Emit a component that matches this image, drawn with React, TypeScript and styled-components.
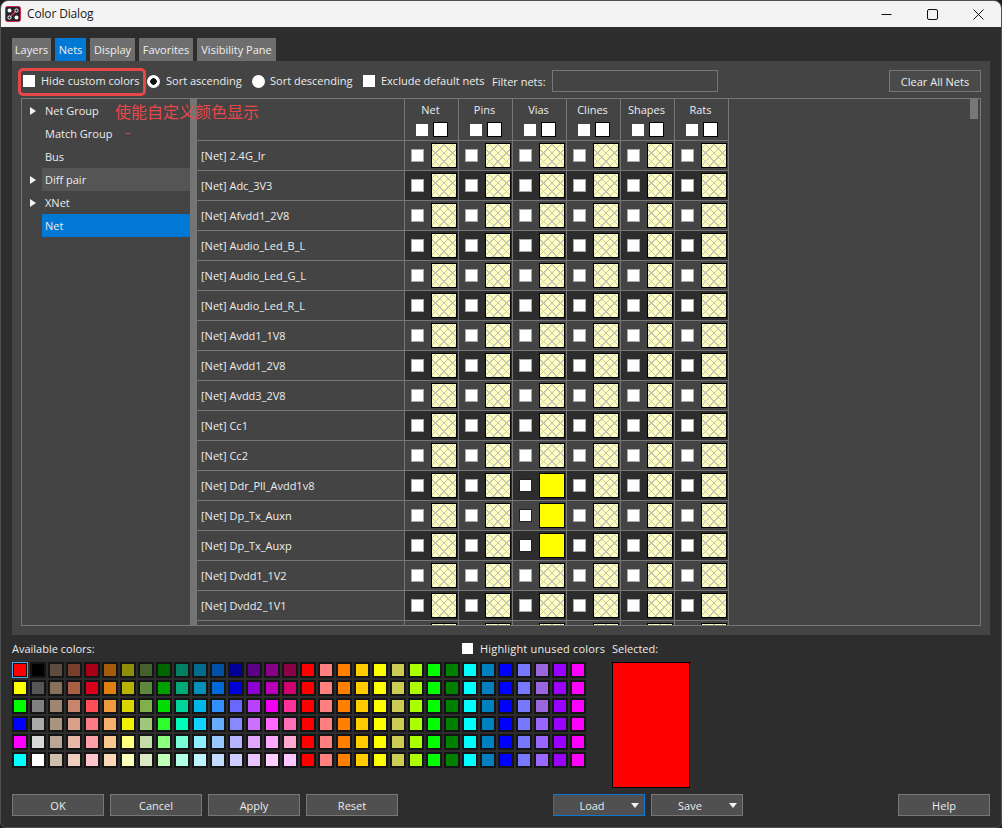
import React from 'react';
import styled, { createGlobalStyle } from 'styled-components';

const GlobalStyle = createGlobalStyle`
  html, body { margin: 0; padding: 0; background: #1e1e1e; }
  * { box-sizing: border-box; }
`;

const Window = styled.div`
  width: 1002px;
  height: 828px;
  overflow: hidden;
  display: flex;
  flex-direction: column;
  background: #2d2d2d;
  border: 1px solid #505050;
  border-radius: 8px 8px 6px 6px;
  font-family: "Open Sans", "Noto Sans CJK SC", sans-serif;
  font-size: 11px;
  color: #ececec;
  position: relative;
`;

const TitleBar = styled.div`
  height: 26px;
  flex: none;
  display: flex;
  align-items: center;
  padding-left: 4px;
  background: #f3f3f3;
  color: #1a1a1a;
  font-size: 12px;
`;

const TitleText = styled.span`
  margin-left: 6px;
  padding-bottom: 2px;
  letter-spacing: -0.15px;
`;

const WinControls = styled.div`
  margin-left: auto;
  display: flex;
`;

const WinButton = styled.div`
  width: 46px;
  height: 26px;
  display: flex;
  align-items: center;
  justify-content: center;
`;

const Content = styled.div`
  flex: 1;
  display: flex;
  flex-direction: column;
  padding: 11px 11px 0;
`;

const TabBar = styled.div`
  height: 23px;
  display: flex;
  gap: 4px;
`;

const Tab = styled.div<{ $active?: boolean; $w: number }>`
  width: ${p => p.$w}px;
  display: flex;
  align-items: center;
  justify-content: center;
  background: ${p => (p.$active ? '#0078d4' : '#6e6e6e')};
  color: #f0f0f0;
`;

const Panel = styled.div`
  height: 574px;
  padding: 9px;
  background: #444444;
  display: flex;
  flex-direction: column;
  gap: 6px;
`;

const Toolbar = styled.div`
  height: 22px;
  flex: none;
  display: flex;
  align-items: center;
  padding-left: 2px;
`;

const BoxCheck = styled.span`
  width: 12px;
  height: 12px;
  flex: none;
  background: #fff;
`;

const Radio = styled.span<{ $on?: boolean }>`
  width: 13px;
  height: 13px;
  flex: none;
  border-radius: 50%;
  background: ${p => (p.$on ? 'radial-gradient(circle, #111 0 3px, #fff 3.5px)' : '#fff')};
`;

const OptionLabel = styled.span<{ $w: number; $ml?: number; $low?: boolean }>`
  width: ${p => p.$w}px;
  flex: none;
  margin-left: ${p => p.$ml ?? 6}px;
  padding-bottom: ${p => (p.$low ? 0 : 2)}px;
  white-space: nowrap;
`;

const FilterInput = styled.div`
  width: 166px;
  height: 22px;
  margin-left: 6px;
  border: 1px solid #777;
  background: #444;
`;

const ClearButton = styled.div`
  width: 92px;
  height: 22px;
  margin-left: auto;
  display: flex;
  align-items: center;
  justify-content: center;
  border: 1px solid #777;
  background: #4a4a4a;
`;

const Frame = styled.div`
  height: 528px;
  flex: none;
  display: flex;
  border: 1px solid #777;
  overflow: hidden;
`;

const Tree = styled.div`
  width: 168px;
  flex: none;
`;

const TreeItem = styled.div`
  height: 23px;
  display: flex;
  align-items: center;
`;

const ArrowSlot = styled.span`
  width: 20px;
  flex: none;
  padding-left: 8px;
`;

const Arrow = styled.span`
  display: block;
  width: 0;
  height: 0;
  border-left: 6px solid #f2f2f2;
  border-top: 4.5px solid transparent;
  border-bottom: 4.5px solid transparent;
`;

const TreeLabel = styled.span<{ $tone?: 'hover' | 'selected' }>`
  flex: 1;
  height: 23px;
  line-height: 23px;
  padding-left: 3px;
  background: ${p => (p.$tone === 'selected' ? '#0078d4' : p.$tone === 'hover' ? '#555555' : 'transparent')};
`;

const Splitter = styled.div`
  width: 7px;
  flex: none;
  background: #747474;
`;

const TableArea = styled.div`
  flex: 1;
  position: relative;
  overflow: hidden;
`;

const ScrollThumb = styled.div`
  position: absolute;
  top: 0;
  right: 2px;
  width: 8px;
  height: 20px;
  background: #777;
`;

const GridRow = styled.div<{ $header?: boolean }>`
  width: 532px;
  height: ${p => (p.$header ? 42 : 30)}px;
  display: grid;
  grid-template-columns: 208px repeat(6, 54px);
  border-bottom: 1px solid #777;
`;

const NameCell = styled.div`
  display: flex;
  align-items: center;
  padding-left: 4px;
  border-right: 1px solid #777;
  white-space: nowrap;
`;

const HeadCell = styled.div`
  display: flex;
  flex-direction: column;
  align-items: center;
  padding: 3px 2px 0 0;
  border-right: 1px solid #777;
`;

const HeadChecks = styled.div`
  margin: 5px 0 0 11px;
  align-self: flex-start;
  display: flex;
  align-items: center;
  gap: 5px;
`;

const HeadSmall = styled.span`
  width: 12px;
  height: 12px;
  background: #fff;
`;

const HeadBig = styled.span`
  width: 15px;
  height: 15px;
  background: #fff;
  border: 1px solid #000;
`;

const ColorCell = styled.div<{ $dark: boolean }>`
  display: flex;
  align-items: center;
  padding-left: 6px;
  background: ${p => (p.$dark ? '#2d2d2d' : '#444444')};
  border-right: 1px solid #777;
`;

const CellCheck = styled.span<{ $plain?: boolean }>`
  width: 13px;
  height: 13px;
  flex: none;
  background: #fff;
  border: ${p => (p.$plain ? '1px solid #222' : '1px solid #a8a8a8')};
`;

const Swatch = styled.span<{ $fill?: string }>`
  width: 26px;
  height: 25px;
  flex: none;
  margin-left: 7px;
  border: 1px solid #000;
  background-color: ${p => p.$fill || '#ffffc0'};
  background-image: ${p =>
    p.$fill
      ? 'none'
      : `repeating-linear-gradient(45deg, #c6c6b6 0 1px, transparent 1px 6px),
         repeating-linear-gradient(-45deg, #c6c6b6 0 1px, transparent 1px 6px)`};
`;

const Lower = styled.div`
  margin-top: 7px;
  display: grid;
  grid-template-columns: 600px 1fr;
`;

const LowerHead = styled.div`
  height: 13px;
  display: flex;
  align-items: center;
`;

const HighlightCheck = styled.span`
  width: 11px;
  height: 11px;
  margin-left: auto;
  background: #fff;
`;

const HighlightLabel = styled.span`
  width: 125px;
  margin: 0 7px 0 7px;
  letter-spacing: 0.18px;
  white-space: nowrap;
`;

const PaletteGrid = styled.div`
  margin-top: 7px;
  display: grid;
  grid-template-rows: repeat(6, 16px);
  grid-auto-flow: column;
  grid-auto-columns: 16px;
  gap: 2px;
`;

const PaletteCell = styled.span<{ $c: string; $current?: boolean }>`
  background: ${p => p.$c};
  border: 2px solid #141414;
  ${p => p.$current && 'outline: 1px solid #4aa8e8; outline-offset: -1px;'}
`;

const SelectedBox = styled.div`
  margin-top: 7px;
  width: 78px;
  height: 126px;
  background: #ff0000;
  border: 1px solid #000;
`;

const ButtonRow = styled.div`
  margin-top: 6px;
  display: flex;
  gap: 6px;
`;

const Button = styled.div<{ $ml?: string; $menu?: boolean; $focus?: boolean }>`
  position: relative;
  width: 92px;
  height: 22px;
  display: flex;
  align-items: center;
  justify-content: center;
  padding-right: ${p => (p.$menu ? 14 : 0)}px;
  margin-left: ${p => p.$ml || 0};
  background: #505050;
  border: 1px solid ${p => (p.$focus ? '#0a78d0' : '#777')};
`;

const MenuArrow = styled.span`
  position: absolute;
  right: 5px;
  top: 8px;
  width: 0;
  height: 0;
  border-top: 5px solid #f2f2f2;
  border-left: 4.5px solid transparent;
  border-right: 4.5px solid transparent;
`;

const NoteBox = styled.div`
  position: absolute;
  left: 17px;
  top: 67px;
  width: 128px;
  height: 28px;
  border: 3px solid #e8474a;
  border-radius: 5px;
`;

const NoteText = styled.div`
  position: absolute;
  left: 114px;
  top: 101px;
  font-size: 16px;
  line-height: 20px;
  color: #e8474a;
  white-space: nowrap;
`;

const NoteDash = styled.div`
  position: absolute;
  left: 125px;
  top: 132px;
  width: 4px;
  height: 1px;
  background: #e8474a;
`;

const tabs = [
  { label: 'Layers', w: 39 },
  { label: 'Nets', w: 31, active: true },
  { label: 'Display', w: 45 },
  { label: 'Favorites', w: 54 },
  { label: 'Visibility Pane', w: 79 },
];

const treeItems: { label: string; arrow?: boolean; tone?: 'hover' | 'selected' }[] = [
  { label: 'Net Group', arrow: true },
  { label: 'Match Group' },
  { label: 'Bus' },
  { label: 'Diff pair', arrow: true, tone: 'hover' },
  { label: 'XNet', arrow: true },
  { label: 'Net', tone: 'selected' },
];

const columns = ['Net', 'Pins', 'Vias', 'Clines', 'Shapes', 'Rats'];

const nets = [
  '2.4G_Ir', 'Adc_3V3', 'Afvdd1_2V8', 'Audio_Led_B_L', 'Audio_Led_G_L', 'Audio_Led_R_L',
  'Avdd1_1V8', 'Avdd1_2V8', 'Avdd3_2V8', 'Cc1', 'Cc2', 'Ddr_Pll_Avdd1v8',
  'Dp_Tx_Auxn', 'Dp_Tx_Auxp', 'Dvdd1_1V2', 'Dvdd2_1V1', '',
];

// palette is listed column by column, 6 shades each
const R6 = (c: string) => [c, c, c, c, c, c];
const palette: string[][] = [
  ['#ff0000', '#ffff00', '#00ff00', '#0000ff', '#ff00ff', '#00ffff'],
  ['#000000', '#555555', '#808080', '#aaaaaa', '#d8d8d8', '#ffffff'],
  ['#5e4c3e', '#87705c', '#9e8672', '#a8947f', '#baa697', '#cdbfab'],
  ['#78402c', '#aa5f44', '#c9856c', '#d9a08c', '#e8b8a8', '#efccc0'],
  ['#a80014', '#d9001a', '#ff4d5a', '#ff7b85', '#ff9fa8', '#ffc4cc'],
  ['#a45c0c', '#e07f10', '#f09a40', '#f4b06c', '#f8c890', '#fcd8b4'],
  ['#8e8e0a', '#b4b400', '#d8d800', '#f0f000', '#ffff80', '#ffffbc'],
  ['#44602c', '#60883c', '#80b04c', '#a0c878', '#c4dca8', '#dce8c4'],
  ['#006400', '#00a000', '#00dc00', '#2cff2c', '#8cff80', '#c0ffb8'],
  ['#008060', '#00a878', '#00d498', '#00fcb8', '#78ffd8', '#b4ffe8'],
  ['#006c8c', '#0090b8', '#00b8e8', '#10d4ff', '#90ecff', '#c0f4ff'],
  ['#0050a8', '#0068d8', '#3090ff', '#68acff', '#98c8ff', '#c0dcff'],
  ['#000098', '#0000d8', '#6868ff', '#8888ff', '#b4b4ff', '#ccccff'],
  ['#5c0088', '#8c00d0', '#b840ff', '#cc70ff', '#e0a8ff', '#e8c4ff'],
  ['#880088', '#b800b8', '#f000f0', '#ff68ff', '#ffa8ff', '#ffd0ff'],
  ['#8c0048', '#d00070', '#ff3098', '#ff70b8', '#ffa8d0', '#ffc8ff'],
  R6('#ff0000'),
  R6('#ff8080'),
  R6('#ff8000'),
  R6('#ffcc00'),
  R6('#ffff00'),
  R6('#cccc55'),
  R6('#aaff00'),
  R6('#00ff00'),
  R6('#008000'),
  R6('#00ffff'),
  R6('#0080c0'),
  R6('#0000ff'),
  R6('#7777ff'),
  ['#9966dd', '#9966dd', '#9966dd', '#9966ff', '#9966ff', '#9966ff'],
  R6('#9900ff'),
  R6('#ff00ff'),
];

function AppIcon() {
  return (
    <svg width="16" height="16" viewBox="0 0 16 16">
      <rect x="0.5" y="0.5" width="15" height="15" rx="2" fill="#25252c" stroke="#c8284a" />
      <line x1="4" y1="12" x2="12" y2="4" stroke="#e0304a" strokeWidth="1.5" />
      <circle cx="4.5" cy="4.5" r="2" fill="#fff" />
      <circle cx="11.5" cy="4.5" r="1.6" fill="#25252c" stroke="#fff" />
      <circle cx="4.5" cy="11.5" r="1.6" fill="#25252c" stroke="#fff" />
      <circle cx="11.5" cy="11.5" r="2" fill="#fff" />
    </svg>
  );
}

function WindowControls() {
  return (
    <WinControls>
      <WinButton>
        <svg width="11" height="11" viewBox="0 0 11 11"><line x1="0.5" y1="5.5" x2="10.5" y2="5.5" stroke="#111" /></svg>
      </WinButton>
      <WinButton>
        <svg width="11" height="11" viewBox="0 0 11 11"><rect x="0.5" y="0.5" width="10" height="10" rx="1.5" fill="none" stroke="#111" /></svg>
      </WinButton>
      <WinButton>
        <svg width="11" height="11" viewBox="0 0 11 11"><path d="M0.5 0.5 L10.5 10.5 M10.5 0.5 L0.5 10.5" stroke="#111" /></svg>
      </WinButton>
    </WinControls>
  );
}

export default function App() {
  return (
    <Window>
      <GlobalStyle />
      <TitleBar>
        <AppIcon />
        <TitleText>Color Dialog</TitleText>
        <WindowControls />
      </TitleBar>
      <Content>
        <TabBar>
          {tabs.map(t => (
            <Tab key={t.label} $w={t.w} $active={t.active}>{t.label}</Tab>
          ))}
        </TabBar>
        <Panel>
          <Toolbar>
            <BoxCheck />
            <OptionLabel $w={106}>Hide custom colors</OptionLabel>
            <Radio $on />
            <OptionLabel $w={86}>Sort ascending</OptionLabel>
            <Radio />
            <OptionLabel $w={93} $ml={5}>Sort descending</OptionLabel>
            <BoxCheck />
            <OptionLabel $w={111}>Exclude default nets</OptionLabel>
            <OptionLabel $w={54} $ml={0} $low>Filter nets:</OptionLabel>
            <FilterInput />
            <ClearButton>Clear All Nets</ClearButton>
          </Toolbar>
          <Frame>
            <Tree>
              {treeItems.map(item => (
                <TreeItem key={item.label}>
                  <ArrowSlot>{item.arrow && <Arrow />}</ArrowSlot>
                  <TreeLabel $tone={item.tone}>{item.label}</TreeLabel>
                </TreeItem>
              ))}
            </Tree>
            <Splitter />
            <TableArea>
              <GridRow $header>
                <NameCell />
                {columns.map(c => (
                  <HeadCell key={c}>
                    {c}
                    <HeadChecks>
                      <HeadSmall />
                      <HeadBig />
                    </HeadChecks>
                  </HeadCell>
                ))}
              </GridRow>
              {nets.map((net, i) => {
                const yellow = i >= 11 && i <= 13;
                return (
                  <GridRow key={i}>
                    <NameCell>{net && `[Net] ${net}`}</NameCell>
                    {columns.map(c => (
                      <ColorCell key={c} $dark={i % 2 === 1}>
                        <CellCheck $plain={yellow && c === 'Vias'} />
                        <Swatch $fill={yellow && c === 'Vias' ? '#ffff00' : undefined} />
                      </ColorCell>
                    ))}
                  </GridRow>
                );
              })}
              <ScrollThumb />
            </TableArea>
          </Frame>
        </Panel>
        <Lower>
          <div>
            <LowerHead>
              Available colors:
              <HighlightCheck />
              <HighlightLabel>Highlight unused colors</HighlightLabel>
            </LowerHead>
            <PaletteGrid>
              {palette.flatMap((col, x) =>
                col.map((c, y) => <PaletteCell key={`${x}-${y}`} $c={c} $current={x === 0 && y === 0} />),
              )}
            </PaletteGrid>
          </div>
          <div>
            <LowerHead>Selected:</LowerHead>
            <SelectedBox />
          </div>
        </Lower>
        <ButtonRow>
          <Button>OK</Button>
          <Button>Cancel</Button>
          <Button>Apply</Button>
          <Button>Reset</Button>
          <Button $ml="149px" $menu $focus>Load<MenuArrow /></Button>
          <Button $menu>Save<MenuArrow /></Button>
          <Button $ml="auto">Help</Button>
        </ButtonRow>
      </Content>
      <NoteBox />
      <NoteText>使能自定义颜色显示</NoteText>
      <NoteDash />
    </Window>
  );
}
